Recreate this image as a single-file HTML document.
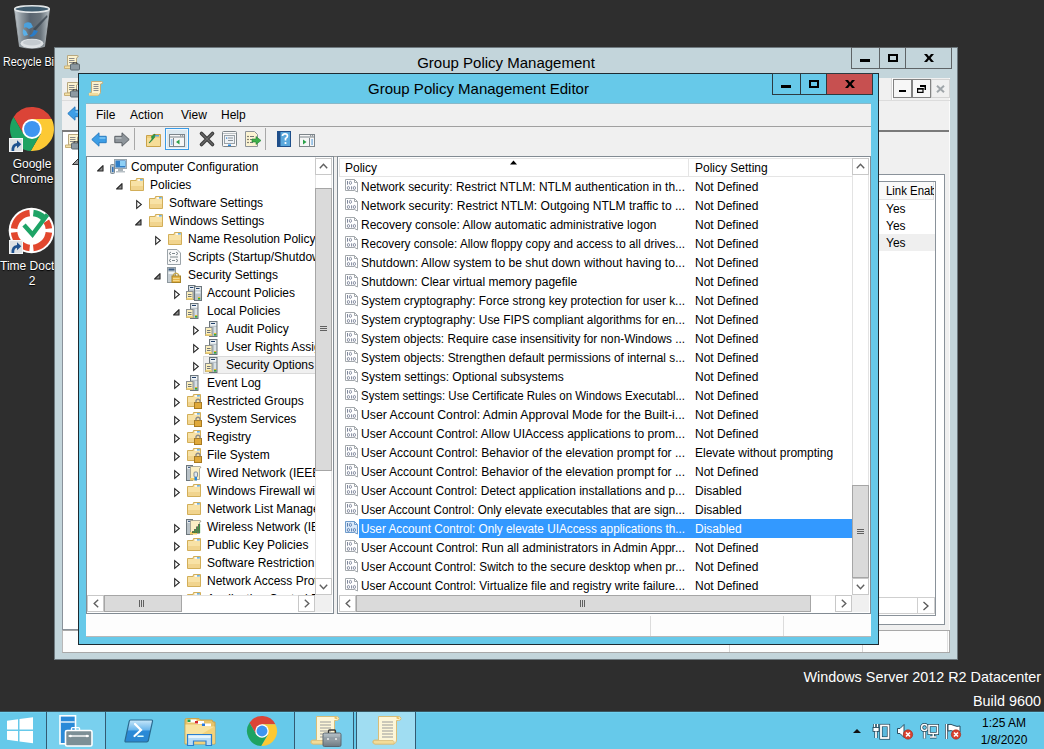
<!DOCTYPE html><html><head><meta charset="utf-8"><style>
*{margin:0;padding:0;box-sizing:border-box}
html,body{width:1044px;height:749px;overflow:hidden;background:#2e2e2e;font-family:"Liberation Sans",sans-serif}
div{position:absolute}
.t{white-space:nowrap}
svg{position:absolute;overflow:visible}
.dt{color:#fff;font-size:12px;line-height:15px;text-shadow:0 1px 1px #000;text-align:center}
</style></head><body>
<svg style="left:14px;top:5px" width="36" height="44" viewBox="0 0 36 44">
<defs><linearGradient id="rb" x1="0" x2="1"><stop offset="0" stop-color="#c4cbd0"/><stop offset="0.2" stop-color="#8e989f"/><stop offset="0.45" stop-color="#5a6570"/><stop offset="0.75" stop-color="#6a747c"/><stop offset="1" stop-color="#b8c0c5"/></linearGradient></defs>
<path d="M0.5 4 L35.5 4 L30.5 41.5 Q18 45 5.5 41.5 Z" fill="url(#rb)" stroke="#a9b1b6" stroke-width="0.8"/>
<path d="M19 24 L33 10 L33.5 12 L21 26 Z" fill="#3c4650" opacity="0.8"/>
<ellipse cx="18" cy="4" rx="17.3" ry="3.2" fill="#405c6e" stroke="#e2e6e8" stroke-width="1.5"/>
<path d="M10 19 Q13 16 17 18 L19 22 L15 24 Q12 21 10 23 Z" fill="#4aa0dc"/>
<path d="M9 24 Q8 28 10 31 L14 30 L12 26 Z" fill="#5ab0e8"/>
<path d="M15 31 Q19 33 22 29 L24 26 L20 25 L18 29 Z" fill="#2a7cc8"/>
<ellipse cx="18" cy="38.5" rx="11.5" ry="4.8" fill="#dde1e4"/><ellipse cx="18" cy="37.5" rx="9" ry="3" fill="#c5cbd0"/>
</svg>
<div class="t" style="left:3px;top:55px;font-size:12px;line-height:15px;color:#fff;text-shadow:0 1px 1px #000;transform:scaleX(0.9);transform-origin:0 0">Recycle Bi</div>
<svg style="left:10px;top:106.69999999999999px" width="44" height="44" viewBox="10 106.69999999999999 44 44"><path d="M32.00 118.80 L51.65 118.80 A22 22 0 0 0 13.60 116.64 L23.43 133.65 Z" fill="#db4437"/><path d="M40.57 133.65 L30.75 150.66 A22 22 0 0 0 51.65 118.80 L32.00 118.80 Z" fill="#fcc934"/><path d="M23.43 133.65 L13.60 116.64 A22 22 0 0 0 30.75 150.66 L40.57 133.65 Z" fill="#1ea362"/><circle cx="32" cy="128.7" r="9.90" fill="#fff"/><circle cx="32" cy="128.7" r="8.03" fill="#3e95f0"/></svg>
<div style="left:9px;top:138px;width:14px;height:14px;background:#dde1e4;border:1px solid #f4f6f7"></div>
<svg style="left:9px;top:138px" width="14" height="14"><path d="M2.5 13 Q2.2 5.5 8 5 V2.2 L12.3 6.3 L8 10.3 V7.8 Q5 8 5.2 13 Z" fill="#1f528f"/></svg>
<div class="t" style="left:0px;top:157px;font-size:12px;line-height:15px;color:#fff;width:64px;text-align:center;text-shadow:0 1px 1px #000">Google</div>
<div class="t" style="left:0px;top:172px;font-size:12px;line-height:15px;color:#fff;width:64px;text-align:center;text-shadow:0 1px 1px #000">Chrome</div>
<svg style="left:8px;top:207px" width="47" height="47" viewBox="0 0 47 47">
<circle cx="23.5" cy="23.5" r="22.8" fill="#fff"/>
<path d="M38.34 14.23 A17.5 17.5 0 0 1 40.90 21.67 M40.90 25.33 A17.5 17.5 0 0 1 25.33 40.90 M21.67 40.90 A17.5 17.5 0 0 1 6.10 25.33 M6.10 21.67 A17.5 17.5 0 0 1 21.67 6.10" fill="none" stroke="#e2472e" stroke-width="6.5"/>
<path d="M25.33 6.10 A17.5 17.5 0 0 1 35.87 11.13" fill="none" stroke="#1ea466" stroke-width="6.5"/>
<path d="M16 18 L24.5 27.5 L39.5 7.5" fill="none" stroke="#1ea466" stroke-width="4.4"/>
</svg>
<div style="left:9px;top:240px;width:14px;height:14px;background:#dde1e4;border:1px solid #f4f6f7"></div>
<svg style="left:9px;top:240px" width="14" height="14"><path d="M2.5 13 Q2.2 5.5 8 5 V2.2 L12.3 6.3 L8 10.3 V7.8 Q5 8 5.2 13 Z" fill="#1f528f"/></svg>
<div class="t" style="left:0px;top:259px;font-size:12px;line-height:15px;color:#fff;text-shadow:0 1px 1px #000">Time Doct</div>
<div class="t" style="left:0px;top:274px;font-size:12px;line-height:15px;color:#fff;width:64px;text-align:center;text-shadow:0 1px 1px #000">2</div>
<div class="t" style="left:700px;top:668px;font-size:14.4px;line-height:18px;color:#fff;width:341px;text-align:right">Windows Server 2012 R2 Datacenter</div>
<div class="t" style="left:700px;top:692px;font-size:14.4px;line-height:18px;color:#fff;width:341px;text-align:right">Build 9600</div>
<div style="left:54px;top:47px;width:904px;height:613px;background:#c3d5db;border:1px solid #6f7a80"></div>
<div class="t" style="left:54px;top:54px;font-size:15px;line-height:18px;color:#000;width:904px;text-align:center">Group Policy Management</div>
<div style="left:851px;top:47px;width:29px;height:22px;border:1px solid #5e6366;background:#c3d5db"></div>
<div style="left:879px;top:47px;width:27px;height:22px;border:1px solid #5e6366;background:#c3d5db"></div>
<div style="left:905px;top:47px;width:47px;height:22px;border:1px solid #5e6366;background:#c3d5db"></div>
<div style="left:860px;top:59px;width:10px;height:3px;background:#000"></div>
<div style="left:888px;top:54px;width:10px;height:8px;border:2px solid #000;border-top-width:2px"></div>
<svg style="left:924px;top:54px" width="10" height="8"><path d="M0 0 H3 L5 2.6 L7 0 H10 L6.6 4 L10 8 H7 L5 5.4 L3 8 H0 L3.4 4 Z" fill="#000"/></svg>
<div style="left:62px;top:78px;width:888px;height:574px;background:#f0f0f0"></div>
<div style="left:949px;top:78px;width:1px;height:574px;background:#fbfbfb"></div>
<div style="left:62px;top:100px;width:888px;height:1px;background:#dcdcdc"></div>
<div style="left:891px;top:78px;width:1px;height:22px;background:#d9d9d9"></div>
<div style="left:892px;top:78px;width:1px;height:22px;background:#fff"></div>
<div style="left:893px;top:79px;width:19px;height:19px;border:1px solid #828282;background:#f7f7f7"></div>
<div style="left:912px;top:79px;width:19px;height:19px;border:1px solid #828282;background:#f7f7f7"></div>
<div style="left:931px;top:79px;width:19px;height:19px;border:1px solid #d4d4d4;background:#f0f0f0"></div>
<div style="left:899px;top:90px;width:7px;height:2px;background:#000"></div>
<svg style="left:917px;top:85px" width="9" height="8"><path d="M3 0 H9 V5 H7.5 V2 H3 Z" fill="#000"/><path d="M0.6 3.6 H6 V7.4 H0.6 Z" fill="#f7f7f7" stroke="#000" stroke-width="1.2"/><path d="M0 3 H6.6 V4.6 H0 Z" fill="#000"/></svg>
<svg style="left:936px;top:85px" width="9" height="8"><path d="M1 0.8 L8 7.2 M8 0.8 L1 7.2" stroke="#a0a6aa" stroke-width="2"/></svg>
<div style="left:62px;top:130px;width:887px;height:2px;background:#7a7a7a"></div>
<div style="left:62px;top:132px;width:30px;height:498px;background:#fff;border-left:1px solid #8a929a;border-bottom:1px solid #8a929a"></div>
<div style="left:870px;top:174px;width:75px;height:451px;background:#fff;border:1px solid #8a929a;border-left:none"></div>
<div style="left:870px;top:181px;width:66px;height:435px;background:#fff;border:1px solid #8a929a;border-left:none"></div>
<div style="left:870px;top:182px;width:64px;height:18px;background:#f9f9f9;border-bottom:1px solid #e3e3e3;border-right:1px solid #e3e3e3"></div>
<div style="left:870px;top:182px;width:64px;height:18px;overflow:hidden"><div class="t" style="left:16px;top:0px;font-size:12px;line-height:19px;color:#000;transform:scaleX(0.95);transform-origin:0 0">Link Enab</div></div>
<div class="t" style="left:886px;top:201px;font-size:12px;line-height:17px;color:#000;">Yes</div>
<div class="t" style="left:886px;top:218px;font-size:12px;line-height:17px;color:#000;">Yes</div>
<div style="left:870px;top:234px;width:65px;height:17px;background:#efefef"></div>
<div class="t" style="left:886px;top:235px;font-size:12px;line-height:17px;color:#000;">Yes</div>
<div style="left:870px;top:597px;width:65px;height:17px;background:#fff;border-top:1px solid #cfcfcf;border-bottom:1px solid #cfcfcf;border-right:1px solid #cfcfcf"></div>
<div style="left:917px;top:597px;width:1px;height:17px;background:#cfcfcf"></div>
<svg style="left:922px;top:601px" width="8" height="10"><path d="M1.5 1 L6 5 L1.5 9" fill="none" stroke="#555" stroke-width="1.3"/></svg>
<div style="left:62px;top:630px;width:888px;height:23px;background:#fdfdfd;border:1px solid #a8a8a8;border-left:1px solid #b8b8b8"></div>
<div style="left:947px;top:631px;width:1px;height:21px;background:#e0e0e0"></div>
<div style="left:729px;top:645px;width:1px;height:7px;background:#d6d6d6"></div>
<div style="left:862px;top:645px;width:1px;height:7px;background:#d6d6d6"></div>
<svg style="left:64px;top:82px" width="16" height="15" viewBox="0 0 16 15"><path d="M3.5 0.5 H13 Q15 0.5 14 2 L12.5 3 V11 H3.5 Z" fill="#fbf2cf" stroke="#b8a880"/><path d="M5 3.5 H10.5 M5 5.5 H10.5 M5 7.5 H10.5" stroke="#8a8a8a"/><path d="M0.5 11 H9 V13.5 H0.5 Z" fill="#f4e2a8" stroke="#c8b078"/><rect x="6.5" y="9" width="9" height="6" rx="1" fill="#8e9aa2" stroke="#5e6a72"/><path d="M9 9 V7.8 H13 V9" fill="none" stroke="#3a3a3a"/></svg>
<svg style="left:67px;top:106px" width="16" height="15" viewBox="0 0 16 15"><path d="M0.8 7.5 L8 0.8 V4.3 H15.2 V10.7 H8 V14.2 Z" fill="#3d9ee6" stroke="#2a7cc0" stroke-width="1" stroke-linejoin="round"/><path d="M8.5 5 H14.5 V7 H8.5 Z" fill="#7cc4f4" opacity="0.8"/></svg>
<svg style="left:65px;top:134px" width="16" height="15" viewBox="0 0 16 15"><path d="M3.5 0.5 H13 Q15 0.5 14 2 L12.5 3 V11 H3.5 Z" fill="#fbf2cf" stroke="#b8a880"/><path d="M5 3.5 H10.5 M5 5.5 H10.5 M5 7.5 H10.5" stroke="#8a8a8a"/><path d="M0.5 11 H9 V13.5 H0.5 Z" fill="#f4e2a8" stroke="#c8b078"/><rect x="6.5" y="9" width="9" height="6" rx="1" fill="#8e9aa2" stroke="#5e6a72"/><path d="M9 9 V7.8 H13 V9" fill="none" stroke="#3a3a3a"/></svg>
<svg style="left:72px;top:158px" width="7" height="7" viewBox="0 0 7 7"><path d="M6.5 0.5 V6.5 H0.5 Z" fill="#999" stroke="#333" stroke-width="1"/></svg>
<svg style="left:64px;top:55px" width="16" height="15" viewBox="0 0 16 15"><path d="M3.5 0.5 H13 Q15 0.5 14 2 L12.5 3 V11 H3.5 Z" fill="#fbf2cf" stroke="#b8a880"/><path d="M5 3.5 H10.5 M5 5.5 H10.5 M5 7.5 H10.5" stroke="#8a8a8a"/><path d="M0.5 11 H9 V13.5 H0.5 Z" fill="#f4e2a8" stroke="#c8b078"/><rect x="6.5" y="9" width="9" height="6" rx="1" fill="#8e9aa2" stroke="#5e6a72"/><path d="M9 9 V7.8 H13 V9" fill="none" stroke="#3a3a3a"/></svg>
<div style="left:78px;top:73px;width:801px;height:572px;background:#67c9e9;border:1px solid #1e2a30"></div>
<div class="t" style="left:78px;top:80px;font-size:15px;line-height:18px;color:#000;width:801px;text-align:center">Group Policy Management Editor</div>
<div style="left:772px;top:73px;width:29px;height:22px;border:1px solid #2c3a40;background:#67c9e9"></div>
<div style="left:800px;top:73px;width:27px;height:22px;border:1px solid #2c3a40;background:#67c9e9"></div>
<div style="left:826px;top:73px;width:47px;height:22px;border:1px solid #2c3a40;background:#c75050"></div>
<div style="left:781px;top:85px;width:10px;height:3px;background:#000"></div>
<div style="left:809px;top:80px;width:10px;height:8px;border:2px solid #000"></div>
<svg style="left:845px;top:80px" width="10" height="8"><path d="M0 0 H3 L5 2.6 L7 0 H10 L6.6 4 L10 8 H7 L5 5.4 L3 8 H0 L3.4 4 Z" fill="#000"/></svg>
<div style="left:86px;top:103px;width:785px;height:534px;background:#f0f0f0;border-top:1px solid #8ab8c8"></div>
<div class="t" style="left:96px;top:108px;font-size:12px;line-height:15px;color:#000;">File</div>
<div class="t" style="left:130px;top:108px;font-size:12px;line-height:15px;color:#000;">Action</div>
<div class="t" style="left:181px;top:108px;font-size:12px;line-height:15px;color:#000;">View</div>
<div class="t" style="left:221px;top:108px;font-size:12px;line-height:15px;color:#000;">Help</div>
<div style="left:86px;top:126px;width:785px;height:1px;background:#a0a0a0"></div>
<div style="left:86px;top:156px;width:785px;height:1px;background:#a0a0a0"></div>
<div style="left:86px;top:156px;width:248px;height:458px;background:#fff;border:1px solid #828b93"></div>
<div style="left:337px;top:156px;width:534px;height:458px;background:#fff;border:1px solid #828b93"></div>
<div style="left:86px;top:614px;width:785px;height:23px;background:#fdfdfd;border-bottom:1px solid #b8b8b8"></div>
<div style="left:650px;top:616px;width:1px;height:20px;background:#dcdcdc"></div>
<div style="left:783px;top:616px;width:1px;height:20px;background:#dcdcdc"></div>
<div style="left:87px;top:157px;width:228px;height:438px;overflow:hidden;background:#fff">
<svg style="left:10px;top:8px" width="7" height="7"><path d="M6 0.6 V6 H0.6 Z" fill="#8c8c8c" stroke="#262626" stroke-width="1.1" stroke-linejoin="round"/></svg>
<svg style="left:23px;top:2px" width="17" height="15" viewBox="0 0 17 15">
<rect x="4.5" y="0.5" width="12" height="9" fill="#c9d3da" stroke="#9aa6ae"/><rect x="5.5" y="1.5" width="10" height="7" fill="#2f7fc8"/><rect x="10" y="2" width="5" height="5" fill="#8ed0f5"/>
<rect x="8" y="10" width="5" height="2" fill="#a8b2b8"/><rect x="6" y="12" width="9" height="1.5" fill="#b8c0c5"/>
<rect x="0.5" y="5.5" width="4" height="9" rx="1" fill="#b8c4cc" stroke="#7a8a94"/><rect x="2" y="8" width="1.5" height="5" fill="#2d6fb8"/></svg>
<div class="t" style="left:44px;top:1px;font-size:12px;line-height:18px;color:#000;">Computer Configuration</div>
<svg style="left:29px;top:26px" width="7" height="7"><path d="M6 0.6 V6 H0.6 Z" fill="#8c8c8c" stroke="#262626" stroke-width="1.1" stroke-linejoin="round"/></svg>
<svg style="left:42px;top:20px" width="16" height="16" viewBox="0 0 16 16"><path d="M1.5 3.5 H7 L7.5 1.5 H14.5 V13.5 H1.5 Z" fill="#f3d68f" stroke="#d2ae58" stroke-width="1"/><rect x="8.5" y="2.2" width="5.3" height="1.6" fill="#fff"/><rect x="11" y="2.2" width="2.8" height="1.3" fill="#4aa2e0"/><path d="M2 4 H14 V13 H2 Z" fill="#f8e2a6"/><path d="M2 9 H14 V13 H2 Z" fill="#f1d48e"/></svg>
<div class="t" style="left:63px;top:19px;font-size:12px;line-height:18px;color:#000;">Policies</div>
<svg style="left:49px;top:43px" width="7" height="10"><path d="M0.7 0.7 L5.3 4.5 L0.7 8.3 Z" fill="#fff" stroke="#262626" stroke-width="1.1"/></svg>
<svg style="left:61px;top:38px" width="16" height="16" viewBox="0 0 16 16"><path d="M1.5 3.5 H7 L7.5 1.5 H14.5 V13.5 H1.5 Z" fill="#f3d68f" stroke="#d2ae58" stroke-width="1"/><rect x="8.5" y="2.2" width="5.3" height="1.6" fill="#fff"/><rect x="11" y="2.2" width="2.8" height="1.3" fill="#4aa2e0"/><path d="M2 4 H14 V13 H2 Z" fill="#f8e2a6"/><path d="M2 9 H14 V13 H2 Z" fill="#f1d48e"/></svg>
<div class="t" style="left:82px;top:37px;font-size:12px;line-height:18px;color:#000;">Software Settings</div>
<svg style="left:48px;top:62px" width="7" height="7"><path d="M6 0.6 V6 H0.6 Z" fill="#8c8c8c" stroke="#262626" stroke-width="1.1" stroke-linejoin="round"/></svg>
<svg style="left:61px;top:56px" width="16" height="16" viewBox="0 0 16 16"><path d="M1.5 3.5 H7 L7.5 1.5 H14.5 V13.5 H1.5 Z" fill="#f3d68f" stroke="#d2ae58" stroke-width="1"/><rect x="8.5" y="2.2" width="5.3" height="1.6" fill="#fff"/><rect x="11" y="2.2" width="2.8" height="1.3" fill="#4aa2e0"/><path d="M2 4 H14 V13 H2 Z" fill="#f8e2a6"/><path d="M2 9 H14 V13 H2 Z" fill="#f1d48e"/></svg>
<div class="t" style="left:82px;top:55px;font-size:12px;line-height:18px;color:#000;">Windows Settings</div>
<svg style="left:68px;top:79px" width="7" height="10"><path d="M0.7 0.7 L5.3 4.5 L0.7 8.3 Z" fill="#fff" stroke="#262626" stroke-width="1.1"/></svg>
<svg style="left:80px;top:74px" width="16" height="16" viewBox="0 0 16 16"><path d="M1.5 3.5 H7 L7.5 1.5 H14.5 V13.5 H1.5 Z" fill="#f3d68f" stroke="#d2ae58" stroke-width="1"/><rect x="8.5" y="2.2" width="5.3" height="1.6" fill="#fff"/><rect x="11" y="2.2" width="2.8" height="1.3" fill="#4aa2e0"/><path d="M2 4 H14 V13 H2 Z" fill="#f8e2a6"/><path d="M2 9 H14 V13 H2 Z" fill="#f1d48e"/></svg>
<div class="t" style="left:101px;top:73px;font-size:12px;line-height:18px;color:#000;">Name Resolution Policy</div>
<svg style="left:80px;top:92px" width="14" height="16" viewBox="0 0 14 16">
<path d="M0.5 0.5 H10 L13.5 4 V15.5 H0.5 Z" fill="#f8f8f8" stroke="#9ba3a8"/>
<path d="M4 3 L2 4.5 L4 6 M9 3 L11 4.5 L9 6 M5 4.5 H8 M3 8 H11 M4 10 L2 11.5 L4 13 M9 10 L11 11.5 L9 13 M5 11.5 H8" fill="none" stroke="#6f7a80" stroke-width="0.9"/></svg>
<div class="t" style="left:101px;top:91px;font-size:12px;line-height:18px;color:#000;">Scripts (Startup/Shutdown)</div>
<svg style="left:67px;top:116px" width="7" height="7"><path d="M6 0.6 V6 H0.6 Z" fill="#8c8c8c" stroke="#262626" stroke-width="1.1" stroke-linejoin="round"/></svg>
<svg style="left:80px;top:110px" width="14" height="16" viewBox="0 0 14 16">
<rect x="0.5" y="0.5" width="8" height="15" fill="#c6ced3" stroke="#8e989e"/><rect x="1.5" y="1.5" width="6" height="2" fill="#3a5a80"/><rect x="1.5" y="5" width="6" height="2" fill="#eef2f4"/>
<path d="M6.5 9 V7.5 Q9 5 11.5 7.5 V9" fill="none" stroke="#c8a850" stroke-width="1.4"/><rect x="5" y="9" width="8.5" height="6.5" fill="#e4b449" stroke="#a88428"/><path d="M6 11.5 H12.5 M6 13.5 H12.5" stroke="#f6d98a"/></svg>
<div class="t" style="left:101px;top:109px;font-size:12px;line-height:18px;color:#000;">Security Settings</div>
<svg style="left:87px;top:133px" width="7" height="10"><path d="M0.7 0.7 L5.3 4.5 L0.7 8.3 Z" fill="#fff" stroke="#262626" stroke-width="1.1"/></svg>
<svg style="left:99px;top:128px" width="16" height="16" viewBox="0 0 16 16">
<rect x="2.5" y="0.5" width="6.5" height="14" fill="#b9c2c8" stroke="#6c767c"/><rect x="3.3" y="1.3" width="4.9" height="3" fill="#f2f6f8"/><rect x="4" y="2" width="3.4" height="1" fill="#1f3f6a"/>
<rect x="8.5" y="1.5" width="7" height="14" fill="#b9c2c8" stroke="#6c767c"/><rect x="9.3" y="2.3" width="5.4" height="3" fill="#f2f6f8"/><rect x="10" y="3" width="3.6" height="1" fill="#1f3f6a"/><rect x="9.5" y="6.5" width="5" height="2" fill="#e8eef2"/>
<rect x="12" y="12" width="2.2" height="1" fill="#e8b830"/><rect x="12" y="13" width="2.2" height="1.6" fill="#30a840"/>
<rect x="0.5" y="6.5" width="6.5" height="8" fill="#fbefbd" stroke="#8c9090"/><path d="M2 9.5 H5.5 M2 11.5 H5.5" stroke="#70767c"/><rect x="0.3" y="13.2" width="6.9" height="1.6" fill="#efcd6a"/></svg>
<div class="t" style="left:120px;top:127px;font-size:12px;line-height:18px;color:#000;">Account Policies</div>
<svg style="left:86px;top:152px" width="7" height="7"><path d="M6 0.6 V6 H0.6 Z" fill="#8c8c8c" stroke="#262626" stroke-width="1.1" stroke-linejoin="round"/></svg>
<svg style="left:99px;top:146px" width="13" height="16" viewBox="0 0 13 16">
<rect x="4.5" y="0.5" width="7.5" height="15" fill="#b9c2c8" stroke="#6c767c"/><rect x="5.3" y="1.3" width="5.9" height="3.4" fill="#f2f6f8"/><rect x="6" y="2" width="4" height="1" fill="#1f3f6a"/><rect x="9" y="6" width="2.2" height="6" fill="#d8e0e4"/>
<rect x="9" y="12" width="2.2" height="1" fill="#e8b830"/><rect x="9" y="13" width="2.2" height="1.6" fill="#30a840"/>
<rect x="0.5" y="6.5" width="6.5" height="8" fill="#fbefbd" stroke="#8c9090"/><path d="M2 9.5 H5.5 M2 11.5 H5.5" stroke="#70767c"/><rect x="0.3" y="13.2" width="6.9" height="1.6" fill="#efcd6a"/></svg>
<div class="t" style="left:120px;top:145px;font-size:12px;line-height:18px;color:#000;">Local Policies</div>
<svg style="left:106px;top:169px" width="7" height="10"><path d="M0.7 0.7 L5.3 4.5 L0.7 8.3 Z" fill="#fff" stroke="#262626" stroke-width="1.1"/></svg>
<svg style="left:118px;top:164px" width="13" height="16" viewBox="0 0 13 16">
<rect x="4.5" y="0.5" width="7.5" height="15" fill="#b9c2c8" stroke="#6c767c"/><rect x="5.3" y="1.3" width="5.9" height="3.4" fill="#f2f6f8"/><rect x="6" y="2" width="4" height="1" fill="#1f3f6a"/><rect x="9" y="6" width="2.2" height="6" fill="#d8e0e4"/>
<rect x="9" y="12" width="2.2" height="1" fill="#e8b830"/><rect x="9" y="13" width="2.2" height="1.6" fill="#30a840"/>
<rect x="0.5" y="6.5" width="6.5" height="8" fill="#fbefbd" stroke="#8c9090"/><path d="M2 9.5 H5.5 M2 11.5 H5.5" stroke="#70767c"/><rect x="0.3" y="13.2" width="6.9" height="1.6" fill="#efcd6a"/></svg>
<div class="t" style="left:139px;top:163px;font-size:12px;line-height:18px;color:#000;">Audit Policy</div>
<svg style="left:106px;top:187px" width="7" height="10"><path d="M0.7 0.7 L5.3 4.5 L0.7 8.3 Z" fill="#fff" stroke="#262626" stroke-width="1.1"/></svg>
<svg style="left:118px;top:182px" width="13" height="16" viewBox="0 0 13 16">
<rect x="4.5" y="0.5" width="7.5" height="15" fill="#b9c2c8" stroke="#6c767c"/><rect x="5.3" y="1.3" width="5.9" height="3.4" fill="#f2f6f8"/><rect x="6" y="2" width="4" height="1" fill="#1f3f6a"/><rect x="9" y="6" width="2.2" height="6" fill="#d8e0e4"/>
<rect x="9" y="12" width="2.2" height="1" fill="#e8b830"/><rect x="9" y="13" width="2.2" height="1.6" fill="#30a840"/>
<rect x="0.5" y="6.5" width="6.5" height="8" fill="#fbefbd" stroke="#8c9090"/><path d="M2 9.5 H5.5 M2 11.5 H5.5" stroke="#70767c"/><rect x="0.3" y="13.2" width="6.9" height="1.6" fill="#efcd6a"/></svg>
<div class="t" style="left:139px;top:181px;font-size:12px;line-height:18px;color:#000;">User Rights Assignment</div>
<div style="left:116px;top:199px;width:140px;height:18px;background:#f0f0f0;border:1px solid #dadada"></div>
<svg style="left:106px;top:205px" width="7" height="10"><path d="M0.7 0.7 L5.3 4.5 L0.7 8.3 Z" fill="#fff" stroke="#262626" stroke-width="1.1"/></svg>
<svg style="left:118px;top:200px" width="13" height="16" viewBox="0 0 13 16">
<rect x="4.5" y="0.5" width="7.5" height="15" fill="#b9c2c8" stroke="#6c767c"/><rect x="5.3" y="1.3" width="5.9" height="3.4" fill="#f2f6f8"/><rect x="6" y="2" width="4" height="1" fill="#1f3f6a"/><rect x="9" y="6" width="2.2" height="6" fill="#d8e0e4"/>
<rect x="9" y="12" width="2.2" height="1" fill="#e8b830"/><rect x="9" y="13" width="2.2" height="1.6" fill="#30a840"/>
<rect x="0.5" y="6.5" width="6.5" height="8" fill="#fbefbd" stroke="#8c9090"/><path d="M2 9.5 H5.5 M2 11.5 H5.5" stroke="#70767c"/><rect x="0.3" y="13.2" width="6.9" height="1.6" fill="#efcd6a"/></svg>
<div class="t" style="left:139px;top:199px;font-size:12px;line-height:18px;color:#000;">Security Options</div>
<svg style="left:87px;top:223px" width="7" height="10"><path d="M0.7 0.7 L5.3 4.5 L0.7 8.3 Z" fill="#fff" stroke="#262626" stroke-width="1.1"/></svg>
<svg style="left:99px;top:218px" width="13" height="16" viewBox="0 0 13 16">
<rect x="4.5" y="0.5" width="7.5" height="15" fill="#b9c2c8" stroke="#6c767c"/><rect x="5.3" y="1.3" width="5.9" height="3.4" fill="#f2f6f8"/><rect x="6" y="2" width="4" height="1" fill="#1f3f6a"/><rect x="9" y="6" width="2.2" height="6" fill="#d8e0e4"/>
<rect x="9" y="12" width="2.2" height="1" fill="#e8b830"/><rect x="9" y="13" width="2.2" height="1.6" fill="#30a840"/>
<rect x="0.5" y="6.5" width="6.5" height="8" fill="#fbefbd" stroke="#8c9090"/><path d="M2 9.5 H5.5 M2 11.5 H5.5" stroke="#70767c"/><rect x="0.3" y="13.2" width="6.9" height="1.6" fill="#efcd6a"/></svg>
<div class="t" style="left:120px;top:217px;font-size:12px;line-height:18px;color:#000;">Event Log</div>
<svg style="left:87px;top:241px" width="7" height="10"><path d="M0.7 0.7 L5.3 4.5 L0.7 8.3 Z" fill="#fff" stroke="#262626" stroke-width="1.1"/></svg>
<svg style="left:99px;top:236px" width="16" height="16" viewBox="0 0 16 16"><path d="M1.5 3.5 H7 L7.5 1.5 H14.5 V13.5 H1.5 Z" fill="#f3d68f" stroke="#d2ae58" stroke-width="1"/><rect x="8.5" y="2.2" width="5.3" height="1.6" fill="#fff"/><rect x="11" y="2.2" width="2.8" height="1.3" fill="#4aa2e0"/><path d="M2 4 H14 V13 H2 Z" fill="#f8e2a6"/><path d="M2 9 H14 V13 H2 Z" fill="#f1d48e"/><rect x="8.5" y="9.5" width="7" height="6" fill="#e0a93a" stroke="#a87a20" stroke-width="1"/><path d="M10 9.5 V7.5 Q12 5 14 7.5 V9.5" fill="none" stroke="#8a8a8a" stroke-width="1.3"/></svg>
<div class="t" style="left:120px;top:235px;font-size:12px;line-height:18px;color:#000;">Restricted Groups</div>
<svg style="left:87px;top:259px" width="7" height="10"><path d="M0.7 0.7 L5.3 4.5 L0.7 8.3 Z" fill="#fff" stroke="#262626" stroke-width="1.1"/></svg>
<svg style="left:99px;top:254px" width="16" height="16" viewBox="0 0 16 16"><path d="M1.5 3.5 H7 L7.5 1.5 H14.5 V13.5 H1.5 Z" fill="#f3d68f" stroke="#d2ae58" stroke-width="1"/><rect x="8.5" y="2.2" width="5.3" height="1.6" fill="#fff"/><rect x="11" y="2.2" width="2.8" height="1.3" fill="#4aa2e0"/><path d="M2 4 H14 V13 H2 Z" fill="#f8e2a6"/><path d="M2 9 H14 V13 H2 Z" fill="#f1d48e"/><rect x="8.5" y="9.5" width="7" height="6" fill="#e0a93a" stroke="#a87a20" stroke-width="1"/><path d="M10 9.5 V7.5 Q12 5 14 7.5 V9.5" fill="none" stroke="#8a8a8a" stroke-width="1.3"/></svg>
<div class="t" style="left:120px;top:253px;font-size:12px;line-height:18px;color:#000;">System Services</div>
<svg style="left:87px;top:277px" width="7" height="10"><path d="M0.7 0.7 L5.3 4.5 L0.7 8.3 Z" fill="#fff" stroke="#262626" stroke-width="1.1"/></svg>
<svg style="left:99px;top:272px" width="16" height="16" viewBox="0 0 16 16"><path d="M1.5 3.5 H7 L7.5 1.5 H14.5 V13.5 H1.5 Z" fill="#f3d68f" stroke="#d2ae58" stroke-width="1"/><rect x="8.5" y="2.2" width="5.3" height="1.6" fill="#fff"/><rect x="11" y="2.2" width="2.8" height="1.3" fill="#4aa2e0"/><path d="M2 4 H14 V13 H2 Z" fill="#f8e2a6"/><path d="M2 9 H14 V13 H2 Z" fill="#f1d48e"/><rect x="8.5" y="9.5" width="7" height="6" fill="#e0a93a" stroke="#a87a20" stroke-width="1"/><path d="M10 9.5 V7.5 Q12 5 14 7.5 V9.5" fill="none" stroke="#8a8a8a" stroke-width="1.3"/></svg>
<div class="t" style="left:120px;top:271px;font-size:12px;line-height:18px;color:#000;">Registry</div>
<svg style="left:87px;top:295px" width="7" height="10"><path d="M0.7 0.7 L5.3 4.5 L0.7 8.3 Z" fill="#fff" stroke="#262626" stroke-width="1.1"/></svg>
<svg style="left:99px;top:290px" width="16" height="16" viewBox="0 0 16 16"><path d="M1.5 3.5 H7 L7.5 1.5 H14.5 V13.5 H1.5 Z" fill="#f3d68f" stroke="#d2ae58" stroke-width="1"/><rect x="8.5" y="2.2" width="5.3" height="1.6" fill="#fff"/><rect x="11" y="2.2" width="2.8" height="1.3" fill="#4aa2e0"/><path d="M2 4 H14 V13 H2 Z" fill="#f8e2a6"/><path d="M2 9 H14 V13 H2 Z" fill="#f1d48e"/><rect x="8.5" y="9.5" width="7" height="6" fill="#e0a93a" stroke="#a87a20" stroke-width="1"/><path d="M10 9.5 V7.5 Q12 5 14 7.5 V9.5" fill="none" stroke="#8a8a8a" stroke-width="1.3"/></svg>
<div class="t" style="left:120px;top:289px;font-size:12px;line-height:18px;color:#000;">File System</div>
<svg style="left:87px;top:313px" width="7" height="10"><path d="M0.7 0.7 L5.3 4.5 L0.7 8.3 Z" fill="#fff" stroke="#262626" stroke-width="1.1"/></svg>
<svg style="left:99px;top:308px" width="16" height="16" viewBox="0 0 16 16">
<rect x="0.5" y="0.5" width="6" height="15" fill="#b9c2c8" stroke="#6c767c"/><rect x="1.3" y="1.3" width="4.4" height="2.5" fill="#f2f6f8"/><rect x="2" y="1.8" width="3" height="1" fill="#1f3f6a"/>
<path d="M4.5 1.5 H14 Q15.5 1.8 14.5 3 L13.5 3.5 V14.5 H4.5 Z" fill="#fbefc4" stroke="#9a9a8a" stroke-width="0.8"/><rect x="4" y="13" width="7" height="2.5" fill="#efcd6a"/>
<rect x="8" y="7" width="3.5" height="5" rx="1" fill="#dfe8ee" stroke="#6a7a88" stroke-width="0.8"/><rect x="8.5" y="12" width="2.5" height="3.5" fill="#2a86d8"/></svg>
<div class="t" style="left:120px;top:307px;font-size:12px;line-height:18px;color:#000;">Wired Network (IEEE 802.3) Policies</div>
<svg style="left:87px;top:331px" width="7" height="10"><path d="M0.7 0.7 L5.3 4.5 L0.7 8.3 Z" fill="#fff" stroke="#262626" stroke-width="1.1"/></svg>
<svg style="left:99px;top:326px" width="16" height="16" viewBox="0 0 16 16"><path d="M1.5 3.5 H7 L7.5 1.5 H14.5 V13.5 H1.5 Z" fill="#f3d68f" stroke="#d2ae58" stroke-width="1"/><rect x="8.5" y="2.2" width="5.3" height="1.6" fill="#fff"/><rect x="11" y="2.2" width="2.8" height="1.3" fill="#4aa2e0"/><path d="M2 4 H14 V13 H2 Z" fill="#f8e2a6"/><path d="M2 9 H14 V13 H2 Z" fill="#f1d48e"/></svg>
<div class="t" style="left:120px;top:325px;font-size:12px;line-height:18px;color:#000;">Windows Firewall with Advanced Security</div>
<svg style="left:99px;top:344px" width="16" height="16" viewBox="0 0 16 16"><path d="M1.5 3.5 H7 L7.5 1.5 H14.5 V13.5 H1.5 Z" fill="#f3d68f" stroke="#d2ae58" stroke-width="1"/><rect x="8.5" y="2.2" width="5.3" height="1.6" fill="#fff"/><rect x="11" y="2.2" width="2.8" height="1.3" fill="#4aa2e0"/><path d="M2 4 H14 V13 H2 Z" fill="#f8e2a6"/><path d="M2 9 H14 V13 H2 Z" fill="#f1d48e"/></svg>
<div class="t" style="left:120px;top:343px;font-size:12px;line-height:18px;color:#000;">Network List Manager Policies</div>
<svg style="left:87px;top:367px" width="7" height="10"><path d="M0.7 0.7 L5.3 4.5 L0.7 8.3 Z" fill="#fff" stroke="#262626" stroke-width="1.1"/></svg>
<svg style="left:99px;top:362px" width="16" height="16" viewBox="0 0 16 16">
<rect x="0.5" y="0.5" width="6" height="15" fill="#b9c2c8" stroke="#6c767c"/><rect x="1.3" y="1.3" width="4.4" height="2.5" fill="#f2f6f8"/><rect x="2" y="1.8" width="3" height="1" fill="#1f3f6a"/>
<path d="M4.5 1.5 H14 Q15.5 1.8 14.5 3 L13.5 3.5 V14.5 H4.5 Z" fill="#fbefc4" stroke="#9a9a8a" stroke-width="0.8"/><rect x="4" y="13" width="7" height="2.5" fill="#efcd6a"/>
<path d="M7 14 V12 M9 14 V10 M11 14 V7.5 M13 14 V5" stroke="#1f1f1f" stroke-width="1.3"/><path d="M7.7 14 V12 M9.7 14 V10 M11.7 14 V7.5 M13.7 14 V5" stroke="#30b040" stroke-width="0.8"/></svg>
<div class="t" style="left:120px;top:361px;font-size:12px;line-height:18px;color:#000;">Wireless Network (IEEE 802.11) Policies</div>
<svg style="left:87px;top:385px" width="7" height="10"><path d="M0.7 0.7 L5.3 4.5 L0.7 8.3 Z" fill="#fff" stroke="#262626" stroke-width="1.1"/></svg>
<svg style="left:99px;top:380px" width="16" height="16" viewBox="0 0 16 16"><path d="M1.5 3.5 H7 L7.5 1.5 H14.5 V13.5 H1.5 Z" fill="#f3d68f" stroke="#d2ae58" stroke-width="1"/><rect x="8.5" y="2.2" width="5.3" height="1.6" fill="#fff"/><rect x="11" y="2.2" width="2.8" height="1.3" fill="#4aa2e0"/><path d="M2 4 H14 V13 H2 Z" fill="#f8e2a6"/><path d="M2 9 H14 V13 H2 Z" fill="#f1d48e"/></svg>
<div class="t" style="left:120px;top:379px;font-size:12px;line-height:18px;color:#000;">Public Key Policies</div>
<svg style="left:87px;top:403px" width="7" height="10"><path d="M0.7 0.7 L5.3 4.5 L0.7 8.3 Z" fill="#fff" stroke="#262626" stroke-width="1.1"/></svg>
<svg style="left:99px;top:398px" width="16" height="16" viewBox="0 0 16 16"><path d="M1.5 3.5 H7 L7.5 1.5 H14.5 V13.5 H1.5 Z" fill="#f3d68f" stroke="#d2ae58" stroke-width="1"/><rect x="8.5" y="2.2" width="5.3" height="1.6" fill="#fff"/><rect x="11" y="2.2" width="2.8" height="1.3" fill="#4aa2e0"/><path d="M2 4 H14 V13 H2 Z" fill="#f8e2a6"/><path d="M2 9 H14 V13 H2 Z" fill="#f1d48e"/></svg>
<div class="t" style="left:120px;top:397px;font-size:12px;line-height:18px;color:#000;">Software Restriction Policies</div>
<svg style="left:87px;top:421px" width="7" height="10"><path d="M0.7 0.7 L5.3 4.5 L0.7 8.3 Z" fill="#fff" stroke="#262626" stroke-width="1.1"/></svg>
<svg style="left:99px;top:416px" width="16" height="16" viewBox="0 0 16 16"><path d="M1.5 3.5 H7 L7.5 1.5 H14.5 V13.5 H1.5 Z" fill="#f3d68f" stroke="#d2ae58" stroke-width="1"/><rect x="8.5" y="2.2" width="5.3" height="1.6" fill="#fff"/><rect x="11" y="2.2" width="2.8" height="1.3" fill="#4aa2e0"/><path d="M2 4 H14 V13 H2 Z" fill="#f8e2a6"/><path d="M2 9 H14 V13 H2 Z" fill="#f1d48e"/></svg>
<div class="t" style="left:120px;top:415px;font-size:12px;line-height:18px;color:#000;">Network Access Protection</div>
<svg style="left:87px;top:439px" width="7" height="10"><path d="M0.7 0.7 L5.3 4.5 L0.7 8.3 Z" fill="#fff" stroke="#262626" stroke-width="1.1"/></svg>
<svg style="left:99px;top:434px" width="16" height="16" viewBox="0 0 16 16"><path d="M1.5 3.5 H7 L7.5 1.5 H14.5 V13.5 H1.5 Z" fill="#f3d68f" stroke="#d2ae58" stroke-width="1"/><rect x="8.5" y="2.2" width="5.3" height="1.6" fill="#fff"/><rect x="11" y="2.2" width="2.8" height="1.3" fill="#4aa2e0"/><path d="M2 4 H14 V13 H2 Z" fill="#f8e2a6"/><path d="M2 9 H14 V13 H2 Z" fill="#f1d48e"/></svg>
<div class="t" style="left:120px;top:433px;font-size:12px;line-height:18px;color:#000;">Application Control Policies</div>
</div>
<div style="left:315px;top:157px;width:17px;height:438px;background:#fff;border-left:1px solid #e3e3e3;border-right:1px solid #e3e3e3"></div>
<div style="left:315px;top:158px;width:17px;height:17px;background:#fff;border:1px solid #c8c8c8"></div>
<svg style="left:319px;top:163px" width="9" height="6"><path d="M0.8 5.2 L4.5 1.2 L8.2 5.2" fill="none" stroke="#606060" stroke-width="1.4"/></svg>
<div style="left:315px;top:188px;width:17px;height:283px;background:#dadada;border:1px solid #a6a6a6"></div>
<div style="left:320px;top:326px;width:7px;height:1px;background:#606060;box-shadow:0 2px 0 #606060,0 4px 0 #606060"></div>
<div style="left:315px;top:578px;width:17px;height:17px;background:#fff;border:1px solid #c8c8c8"></div>
<svg style="left:319px;top:584px" width="9" height="6"><path d="M0.8 0.8 L4.5 4.8 L8.2 0.8" fill="none" stroke="#606060" stroke-width="1.4"/></svg>
<div style="left:87px;top:595px;width:228px;height:17px;background:#fff;border-top:1px solid #e3e3e3"></div>
<div style="left:87px;top:595px;width:17px;height:17px;background:#fff;border:1px solid #c8c8c8"></div>
<svg style="left:93px;top:599px" width="6" height="9"><path d="M5.2 0.8 L1.2 4.5 L5.2 8.2" fill="none" stroke="#606060" stroke-width="1.4"/></svg>
<div style="left:104px;top:595px;width:78px;height:17px;background:#dadada;border:1px solid #a6a6a6"></div>
<div style="left:139px;top:600px;width:1px;height:7px;background:#606060;box-shadow:2px 0 0 #606060,4px 0 0 #606060"></div>
<div style="left:298px;top:595px;width:17px;height:17px;background:#fff;border:1px solid #c8c8c8"></div>
<svg style="left:304px;top:599px" width="6" height="9"><path d="M0.8 0.8 L4.8 4.5 L0.8 8.2" fill="none" stroke="#606060" stroke-width="1.4"/></svg>
<div style="left:315px;top:595px;width:17px;height:17px;background:#f0f0f0"></div>
<div style="left:339px;top:158px;width:513px;height:19px;background:#fff;border:1px solid #e5e5e5;border-right:none"></div>
<div style="left:688px;top:159px;width:1px;height:17px;background:#e5e5e5"></div>
<div class="t" style="left:345px;top:159px;font-size:12px;line-height:19px;color:#000;">Policy</div>
<div class="t" style="left:695px;top:159px;font-size:12px;line-height:19px;color:#000;">Policy Setting</div>
<svg style="left:510px;top:160px" width="7" height="5"><path d="M0 4.5 L3.5 0.5 L7 4.5 Z" fill="#000"/></svg>
<svg style="left:345px;top:179px" width="14" height="15" viewBox="0 0 14 15">
<path d="M0.5 0.5 H9.5 L12.5 3.5 V13 L9.5 11.5 H0.5 Z" fill="#fff" stroke="#a3a8ac"/><path d="M9.5 0.5 V3.5 H12.5" fill="none" stroke="#a3a8ac"/>
<path d="M2.5 2 V5.7 M6.6 7.3 V10.6" stroke="#7f879c" stroke-width="1"/><ellipse cx="5.4" cy="3.85" rx="1.1" ry="1.55" fill="none" stroke="#7f879c" stroke-width="0.9"/><ellipse cx="3.4" cy="8.95" rx="1.1" ry="1.55" fill="none" stroke="#7f879c" stroke-width="0.9"/><ellipse cx="9.4" cy="8.95" rx="1.1" ry="1.55" fill="none" stroke="#7f879c" stroke-width="0.9"/></svg>
<div class="t" style="left:361px;top:178px;font-size:12px;line-height:19px;color:#000;transform:scaleX(0.9956);transform-origin:0 0">Network security: Restrict NTLM: NTLM authentication in th...</div>
<div class="t" style="left:695px;top:178px;font-size:12px;line-height:19px;color:#000;">Not Defined</div>
<svg style="left:345px;top:198px" width="14" height="15" viewBox="0 0 14 15">
<path d="M0.5 0.5 H9.5 L12.5 3.5 V13 L9.5 11.5 H0.5 Z" fill="#fff" stroke="#a3a8ac"/><path d="M9.5 0.5 V3.5 H12.5" fill="none" stroke="#a3a8ac"/>
<path d="M2.5 2 V5.7 M6.6 7.3 V10.6" stroke="#7f879c" stroke-width="1"/><ellipse cx="5.4" cy="3.85" rx="1.1" ry="1.55" fill="none" stroke="#7f879c" stroke-width="0.9"/><ellipse cx="3.4" cy="8.95" rx="1.1" ry="1.55" fill="none" stroke="#7f879c" stroke-width="0.9"/><ellipse cx="9.4" cy="8.95" rx="1.1" ry="1.55" fill="none" stroke="#7f879c" stroke-width="0.9"/></svg>
<div class="t" style="left:361px;top:197px;font-size:12px;line-height:19px;color:#000;transform:scaleX(1.0046);transform-origin:0 0">Network security: Restrict NTLM: Outgoing NTLM traffic to ...</div>
<div class="t" style="left:695px;top:197px;font-size:12px;line-height:19px;color:#000;">Not Defined</div>
<svg style="left:345px;top:217px" width="14" height="15" viewBox="0 0 14 15">
<path d="M0.5 0.5 H9.5 L12.5 3.5 V13 L9.5 11.5 H0.5 Z" fill="#fff" stroke="#a3a8ac"/><path d="M9.5 0.5 V3.5 H12.5" fill="none" stroke="#a3a8ac"/>
<path d="M2.5 2 V5.7 M6.6 7.3 V10.6" stroke="#7f879c" stroke-width="1"/><ellipse cx="5.4" cy="3.85" rx="1.1" ry="1.55" fill="none" stroke="#7f879c" stroke-width="0.9"/><ellipse cx="3.4" cy="8.95" rx="1.1" ry="1.55" fill="none" stroke="#7f879c" stroke-width="0.9"/><ellipse cx="9.4" cy="8.95" rx="1.1" ry="1.55" fill="none" stroke="#7f879c" stroke-width="0.9"/></svg>
<div class="t" style="left:361px;top:216px;font-size:12px;line-height:19px;color:#000;">Recovery console: Allow automatic administrative logon</div>
<div class="t" style="left:695px;top:216px;font-size:12px;line-height:19px;color:#000;">Not Defined</div>
<svg style="left:345px;top:236px" width="14" height="15" viewBox="0 0 14 15">
<path d="M0.5 0.5 H9.5 L12.5 3.5 V13 L9.5 11.5 H0.5 Z" fill="#fff" stroke="#a3a8ac"/><path d="M9.5 0.5 V3.5 H12.5" fill="none" stroke="#a3a8ac"/>
<path d="M2.5 2 V5.7 M6.6 7.3 V10.6" stroke="#7f879c" stroke-width="1"/><ellipse cx="5.4" cy="3.85" rx="1.1" ry="1.55" fill="none" stroke="#7f879c" stroke-width="0.9"/><ellipse cx="3.4" cy="8.95" rx="1.1" ry="1.55" fill="none" stroke="#7f879c" stroke-width="0.9"/><ellipse cx="9.4" cy="8.95" rx="1.1" ry="1.55" fill="none" stroke="#7f879c" stroke-width="0.9"/></svg>
<div class="t" style="left:361px;top:235px;font-size:12px;line-height:19px;color:#000;transform:scaleX(0.9754);transform-origin:0 0">Recovery console: Allow floppy copy and access to all drives...</div>
<div class="t" style="left:695px;top:235px;font-size:12px;line-height:19px;color:#000;">Not Defined</div>
<svg style="left:345px;top:255px" width="14" height="15" viewBox="0 0 14 15">
<path d="M0.5 0.5 H9.5 L12.5 3.5 V13 L9.5 11.5 H0.5 Z" fill="#fff" stroke="#a3a8ac"/><path d="M9.5 0.5 V3.5 H12.5" fill="none" stroke="#a3a8ac"/>
<path d="M2.5 2 V5.7 M6.6 7.3 V10.6" stroke="#7f879c" stroke-width="1"/><ellipse cx="5.4" cy="3.85" rx="1.1" ry="1.55" fill="none" stroke="#7f879c" stroke-width="0.9"/><ellipse cx="3.4" cy="8.95" rx="1.1" ry="1.55" fill="none" stroke="#7f879c" stroke-width="0.9"/><ellipse cx="9.4" cy="8.95" rx="1.1" ry="1.55" fill="none" stroke="#7f879c" stroke-width="0.9"/></svg>
<div class="t" style="left:361px;top:254px;font-size:12px;line-height:19px;color:#000;transform:scaleX(1.0098);transform-origin:0 0">Shutdown: Allow system to be shut down without having to...</div>
<div class="t" style="left:695px;top:254px;font-size:12px;line-height:19px;color:#000;">Not Defined</div>
<svg style="left:345px;top:274px" width="14" height="15" viewBox="0 0 14 15">
<path d="M0.5 0.5 H9.5 L12.5 3.5 V13 L9.5 11.5 H0.5 Z" fill="#fff" stroke="#a3a8ac"/><path d="M9.5 0.5 V3.5 H12.5" fill="none" stroke="#a3a8ac"/>
<path d="M2.5 2 V5.7 M6.6 7.3 V10.6" stroke="#7f879c" stroke-width="1"/><ellipse cx="5.4" cy="3.85" rx="1.1" ry="1.55" fill="none" stroke="#7f879c" stroke-width="0.9"/><ellipse cx="3.4" cy="8.95" rx="1.1" ry="1.55" fill="none" stroke="#7f879c" stroke-width="0.9"/><ellipse cx="9.4" cy="8.95" rx="1.1" ry="1.55" fill="none" stroke="#7f879c" stroke-width="0.9"/></svg>
<div class="t" style="left:361px;top:273px;font-size:12px;line-height:19px;color:#000;">Shutdown: Clear virtual memory pagefile</div>
<div class="t" style="left:695px;top:273px;font-size:12px;line-height:19px;color:#000;">Not Defined</div>
<svg style="left:345px;top:293px" width="14" height="15" viewBox="0 0 14 15">
<path d="M0.5 0.5 H9.5 L12.5 3.5 V13 L9.5 11.5 H0.5 Z" fill="#fff" stroke="#a3a8ac"/><path d="M9.5 0.5 V3.5 H12.5" fill="none" stroke="#a3a8ac"/>
<path d="M2.5 2 V5.7 M6.6 7.3 V10.6" stroke="#7f879c" stroke-width="1"/><ellipse cx="5.4" cy="3.85" rx="1.1" ry="1.55" fill="none" stroke="#7f879c" stroke-width="0.9"/><ellipse cx="3.4" cy="8.95" rx="1.1" ry="1.55" fill="none" stroke="#7f879c" stroke-width="0.9"/><ellipse cx="9.4" cy="8.95" rx="1.1" ry="1.55" fill="none" stroke="#7f879c" stroke-width="0.9"/></svg>
<div class="t" style="left:361px;top:292px;font-size:12px;line-height:19px;color:#000;transform:scaleX(0.9874);transform-origin:0 0">System cryptography: Force strong key protection for user k...</div>
<div class="t" style="left:695px;top:292px;font-size:12px;line-height:19px;color:#000;">Not Defined</div>
<svg style="left:345px;top:312px" width="14" height="15" viewBox="0 0 14 15">
<path d="M0.5 0.5 H9.5 L12.5 3.5 V13 L9.5 11.5 H0.5 Z" fill="#fff" stroke="#a3a8ac"/><path d="M9.5 0.5 V3.5 H12.5" fill="none" stroke="#a3a8ac"/>
<path d="M2.5 2 V5.7 M6.6 7.3 V10.6" stroke="#7f879c" stroke-width="1"/><ellipse cx="5.4" cy="3.85" rx="1.1" ry="1.55" fill="none" stroke="#7f879c" stroke-width="0.9"/><ellipse cx="3.4" cy="8.95" rx="1.1" ry="1.55" fill="none" stroke="#7f879c" stroke-width="0.9"/><ellipse cx="9.4" cy="8.95" rx="1.1" ry="1.55" fill="none" stroke="#7f879c" stroke-width="0.9"/></svg>
<div class="t" style="left:361px;top:311px;font-size:12px;line-height:19px;color:#000;transform:scaleX(0.9874);transform-origin:0 0">System cryptography: Use FIPS compliant algorithms for en...</div>
<div class="t" style="left:695px;top:311px;font-size:12px;line-height:19px;color:#000;">Not Defined</div>
<svg style="left:345px;top:331px" width="14" height="15" viewBox="0 0 14 15">
<path d="M0.5 0.5 H9.5 L12.5 3.5 V13 L9.5 11.5 H0.5 Z" fill="#fff" stroke="#a3a8ac"/><path d="M9.5 0.5 V3.5 H12.5" fill="none" stroke="#a3a8ac"/>
<path d="M2.5 2 V5.7 M6.6 7.3 V10.6" stroke="#7f879c" stroke-width="1"/><ellipse cx="5.4" cy="3.85" rx="1.1" ry="1.55" fill="none" stroke="#7f879c" stroke-width="0.9"/><ellipse cx="3.4" cy="8.95" rx="1.1" ry="1.55" fill="none" stroke="#7f879c" stroke-width="0.9"/><ellipse cx="9.4" cy="8.95" rx="1.1" ry="1.55" fill="none" stroke="#7f879c" stroke-width="0.9"/></svg>
<div class="t" style="left:361px;top:330px;font-size:12px;line-height:19px;color:#000;transform:scaleX(0.9814);transform-origin:0 0">System objects: Require case insensitivity for non-Windows ...</div>
<div class="t" style="left:695px;top:330px;font-size:12px;line-height:19px;color:#000;">Not Defined</div>
<svg style="left:345px;top:350px" width="14" height="15" viewBox="0 0 14 15">
<path d="M0.5 0.5 H9.5 L12.5 3.5 V13 L9.5 11.5 H0.5 Z" fill="#fff" stroke="#a3a8ac"/><path d="M9.5 0.5 V3.5 H12.5" fill="none" stroke="#a3a8ac"/>
<path d="M2.5 2 V5.7 M6.6 7.3 V10.6" stroke="#7f879c" stroke-width="1"/><ellipse cx="5.4" cy="3.85" rx="1.1" ry="1.55" fill="none" stroke="#7f879c" stroke-width="0.9"/><ellipse cx="3.4" cy="8.95" rx="1.1" ry="1.55" fill="none" stroke="#7f879c" stroke-width="0.9"/><ellipse cx="9.4" cy="8.95" rx="1.1" ry="1.55" fill="none" stroke="#7f879c" stroke-width="0.9"/></svg>
<div class="t" style="left:361px;top:349px;font-size:12px;line-height:19px;color:#000;transform:scaleX(0.9853);transform-origin:0 0">System objects: Strengthen default permissions of internal s...</div>
<div class="t" style="left:695px;top:349px;font-size:12px;line-height:19px;color:#000;">Not Defined</div>
<svg style="left:345px;top:369px" width="14" height="15" viewBox="0 0 14 15">
<path d="M0.5 0.5 H9.5 L12.5 3.5 V13 L9.5 11.5 H0.5 Z" fill="#fff" stroke="#a3a8ac"/><path d="M9.5 0.5 V3.5 H12.5" fill="none" stroke="#a3a8ac"/>
<path d="M2.5 2 V5.7 M6.6 7.3 V10.6" stroke="#7f879c" stroke-width="1"/><ellipse cx="5.4" cy="3.85" rx="1.1" ry="1.55" fill="none" stroke="#7f879c" stroke-width="0.9"/><ellipse cx="3.4" cy="8.95" rx="1.1" ry="1.55" fill="none" stroke="#7f879c" stroke-width="0.9"/><ellipse cx="9.4" cy="8.95" rx="1.1" ry="1.55" fill="none" stroke="#7f879c" stroke-width="0.9"/></svg>
<div class="t" style="left:361px;top:368px;font-size:12px;line-height:19px;color:#000;">System settings: Optional subsystems</div>
<div class="t" style="left:695px;top:368px;font-size:12px;line-height:19px;color:#000;">Not Defined</div>
<svg style="left:345px;top:388px" width="14" height="15" viewBox="0 0 14 15">
<path d="M0.5 0.5 H9.5 L12.5 3.5 V13 L9.5 11.5 H0.5 Z" fill="#fff" stroke="#a3a8ac"/><path d="M9.5 0.5 V3.5 H12.5" fill="none" stroke="#a3a8ac"/>
<path d="M2.5 2 V5.7 M6.6 7.3 V10.6" stroke="#7f879c" stroke-width="1"/><ellipse cx="5.4" cy="3.85" rx="1.1" ry="1.55" fill="none" stroke="#7f879c" stroke-width="0.9"/><ellipse cx="3.4" cy="8.95" rx="1.1" ry="1.55" fill="none" stroke="#7f879c" stroke-width="0.9"/><ellipse cx="9.4" cy="8.95" rx="1.1" ry="1.55" fill="none" stroke="#7f879c" stroke-width="0.9"/></svg>
<div class="t" style="left:361px;top:387px;font-size:12px;line-height:19px;color:#000;transform:scaleX(0.9563);transform-origin:0 0">System settings: Use Certificate Rules on Windows Executabl...</div>
<div class="t" style="left:695px;top:387px;font-size:12px;line-height:19px;color:#000;">Not Defined</div>
<svg style="left:345px;top:407px" width="14" height="15" viewBox="0 0 14 15">
<path d="M0.5 0.5 H9.5 L12.5 3.5 V13 L9.5 11.5 H0.5 Z" fill="#fff" stroke="#a3a8ac"/><path d="M9.5 0.5 V3.5 H12.5" fill="none" stroke="#a3a8ac"/>
<path d="M2.5 2 V5.7 M6.6 7.3 V10.6" stroke="#7f879c" stroke-width="1"/><ellipse cx="5.4" cy="3.85" rx="1.1" ry="1.55" fill="none" stroke="#7f879c" stroke-width="0.9"/><ellipse cx="3.4" cy="8.95" rx="1.1" ry="1.55" fill="none" stroke="#7f879c" stroke-width="0.9"/><ellipse cx="9.4" cy="8.95" rx="1.1" ry="1.55" fill="none" stroke="#7f879c" stroke-width="0.9"/></svg>
<div class="t" style="left:361px;top:406px;font-size:12px;line-height:19px;color:#000;transform:scaleX(1.0205);transform-origin:0 0">User Account Control: Admin Approval Mode for the Built-i...</div>
<div class="t" style="left:695px;top:406px;font-size:12px;line-height:19px;color:#000;">Not Defined</div>
<svg style="left:345px;top:426px" width="14" height="15" viewBox="0 0 14 15">
<path d="M0.5 0.5 H9.5 L12.5 3.5 V13 L9.5 11.5 H0.5 Z" fill="#fff" stroke="#a3a8ac"/><path d="M9.5 0.5 V3.5 H12.5" fill="none" stroke="#a3a8ac"/>
<path d="M2.5 2 V5.7 M6.6 7.3 V10.6" stroke="#7f879c" stroke-width="1"/><ellipse cx="5.4" cy="3.85" rx="1.1" ry="1.55" fill="none" stroke="#7f879c" stroke-width="0.9"/><ellipse cx="3.4" cy="8.95" rx="1.1" ry="1.55" fill="none" stroke="#7f879c" stroke-width="0.9"/><ellipse cx="9.4" cy="8.95" rx="1.1" ry="1.55" fill="none" stroke="#7f879c" stroke-width="0.9"/></svg>
<div class="t" style="left:361px;top:425px;font-size:12px;line-height:19px;color:#000;transform:scaleX(1.0037);transform-origin:0 0">User Account Control: Allow UIAccess applications to prom...</div>
<div class="t" style="left:695px;top:425px;font-size:12px;line-height:19px;color:#000;">Not Defined</div>
<svg style="left:345px;top:445px" width="14" height="15" viewBox="0 0 14 15">
<path d="M0.5 0.5 H9.5 L12.5 3.5 V13 L9.5 11.5 H0.5 Z" fill="#fff" stroke="#a3a8ac"/><path d="M9.5 0.5 V3.5 H12.5" fill="none" stroke="#a3a8ac"/>
<path d="M2.5 2 V5.7 M6.6 7.3 V10.6" stroke="#7f879c" stroke-width="1"/><ellipse cx="5.4" cy="3.85" rx="1.1" ry="1.55" fill="none" stroke="#7f879c" stroke-width="0.9"/><ellipse cx="3.4" cy="8.95" rx="1.1" ry="1.55" fill="none" stroke="#7f879c" stroke-width="0.9"/><ellipse cx="9.4" cy="8.95" rx="1.1" ry="1.55" fill="none" stroke="#7f879c" stroke-width="0.9"/></svg>
<div class="t" style="left:361px;top:444px;font-size:12px;line-height:19px;color:#000;transform:scaleX(1.0015);transform-origin:0 0">User Account Control: Behavior of the elevation prompt for ...</div>
<div class="t" style="left:695px;top:444px;font-size:12px;line-height:19px;color:#000;">Elevate without prompting</div>
<svg style="left:345px;top:464px" width="14" height="15" viewBox="0 0 14 15">
<path d="M0.5 0.5 H9.5 L12.5 3.5 V13 L9.5 11.5 H0.5 Z" fill="#fff" stroke="#a3a8ac"/><path d="M9.5 0.5 V3.5 H12.5" fill="none" stroke="#a3a8ac"/>
<path d="M2.5 2 V5.7 M6.6 7.3 V10.6" stroke="#7f879c" stroke-width="1"/><ellipse cx="5.4" cy="3.85" rx="1.1" ry="1.55" fill="none" stroke="#7f879c" stroke-width="0.9"/><ellipse cx="3.4" cy="8.95" rx="1.1" ry="1.55" fill="none" stroke="#7f879c" stroke-width="0.9"/><ellipse cx="9.4" cy="8.95" rx="1.1" ry="1.55" fill="none" stroke="#7f879c" stroke-width="0.9"/></svg>
<div class="t" style="left:361px;top:463px;font-size:12px;line-height:19px;color:#000;transform:scaleX(1.0015);transform-origin:0 0">User Account Control: Behavior of the elevation prompt for ...</div>
<div class="t" style="left:695px;top:463px;font-size:12px;line-height:19px;color:#000;">Not Defined</div>
<svg style="left:345px;top:483px" width="14" height="15" viewBox="0 0 14 15">
<path d="M0.5 0.5 H9.5 L12.5 3.5 V13 L9.5 11.5 H0.5 Z" fill="#fff" stroke="#a3a8ac"/><path d="M9.5 0.5 V3.5 H12.5" fill="none" stroke="#a3a8ac"/>
<path d="M2.5 2 V5.7 M6.6 7.3 V10.6" stroke="#7f879c" stroke-width="1"/><ellipse cx="5.4" cy="3.85" rx="1.1" ry="1.55" fill="none" stroke="#7f879c" stroke-width="0.9"/><ellipse cx="3.4" cy="8.95" rx="1.1" ry="1.55" fill="none" stroke="#7f879c" stroke-width="0.9"/><ellipse cx="9.4" cy="8.95" rx="1.1" ry="1.55" fill="none" stroke="#7f879c" stroke-width="0.9"/></svg>
<div class="t" style="left:361px;top:482px;font-size:12px;line-height:19px;color:#000;transform:scaleX(0.9974);transform-origin:0 0">User Account Control: Detect application installations and p...</div>
<div class="t" style="left:695px;top:482px;font-size:12px;line-height:19px;color:#000;">Disabled</div>
<svg style="left:345px;top:502px" width="14" height="15" viewBox="0 0 14 15">
<path d="M0.5 0.5 H9.5 L12.5 3.5 V13 L9.5 11.5 H0.5 Z" fill="#fff" stroke="#a3a8ac"/><path d="M9.5 0.5 V3.5 H12.5" fill="none" stroke="#a3a8ac"/>
<path d="M2.5 2 V5.7 M6.6 7.3 V10.6" stroke="#7f879c" stroke-width="1"/><ellipse cx="5.4" cy="3.85" rx="1.1" ry="1.55" fill="none" stroke="#7f879c" stroke-width="0.9"/><ellipse cx="3.4" cy="8.95" rx="1.1" ry="1.55" fill="none" stroke="#7f879c" stroke-width="0.9"/><ellipse cx="9.4" cy="8.95" rx="1.1" ry="1.55" fill="none" stroke="#7f879c" stroke-width="0.9"/></svg>
<div class="t" style="left:361px;top:501px;font-size:12px;line-height:19px;color:#000;transform:scaleX(0.9715);transform-origin:0 0">User Account Control: Only elevate executables that are sign...</div>
<div class="t" style="left:695px;top:501px;font-size:12px;line-height:19px;color:#000;">Disabled</div>
<div style="left:359px;top:519px;width:493px;height:19px;background:#3399ff"></div>
<svg style="left:345px;top:521px" width="14" height="15" viewBox="0 0 14 15">
<path d="M0.5 0.5 H9.5 L12.5 3.5 V13 L9.5 11.5 H0.5 Z" fill="#dbeafa" stroke="#6f9ccc"/><path d="M9.5 0.5 V3.5 H12.5" fill="none" stroke="#6f9ccc"/>
<path d="M2.5 2 V5.7 M6.6 7.3 V10.6" stroke="#5a7eb0" stroke-width="1"/><ellipse cx="5.4" cy="3.85" rx="1.1" ry="1.55" fill="none" stroke="#5a7eb0" stroke-width="0.9"/><ellipse cx="3.4" cy="8.95" rx="1.1" ry="1.55" fill="none" stroke="#5a7eb0" stroke-width="0.9"/><ellipse cx="9.4" cy="8.95" rx="1.1" ry="1.55" fill="none" stroke="#5a7eb0" stroke-width="0.9"/></svg>
<div class="t" style="left:361px;top:520px;font-size:12px;line-height:19px;color:#fff;transform:scaleX(0.9794);transform-origin:0 0">User Account Control: Only elevate UIAccess applications th...</div>
<div class="t" style="left:695px;top:520px;font-size:12px;line-height:19px;color:#fff;">Disabled</div>
<svg style="left:345px;top:540px" width="14" height="15" viewBox="0 0 14 15">
<path d="M0.5 0.5 H9.5 L12.5 3.5 V13 L9.5 11.5 H0.5 Z" fill="#fff" stroke="#a3a8ac"/><path d="M9.5 0.5 V3.5 H12.5" fill="none" stroke="#a3a8ac"/>
<path d="M2.5 2 V5.7 M6.6 7.3 V10.6" stroke="#7f879c" stroke-width="1"/><ellipse cx="5.4" cy="3.85" rx="1.1" ry="1.55" fill="none" stroke="#7f879c" stroke-width="0.9"/><ellipse cx="3.4" cy="8.95" rx="1.1" ry="1.55" fill="none" stroke="#7f879c" stroke-width="0.9"/><ellipse cx="9.4" cy="8.95" rx="1.1" ry="1.55" fill="none" stroke="#7f879c" stroke-width="0.9"/></svg>
<div class="t" style="left:361px;top:539px;font-size:12px;line-height:19px;color:#000;transform:scaleX(1.0036);transform-origin:0 0">User Account Control: Run all administrators in Admin Appr...</div>
<div class="t" style="left:695px;top:539px;font-size:12px;line-height:19px;color:#000;">Not Defined</div>
<svg style="left:345px;top:559px" width="14" height="15" viewBox="0 0 14 15">
<path d="M0.5 0.5 H9.5 L12.5 3.5 V13 L9.5 11.5 H0.5 Z" fill="#fff" stroke="#a3a8ac"/><path d="M9.5 0.5 V3.5 H12.5" fill="none" stroke="#a3a8ac"/>
<path d="M2.5 2 V5.7 M6.6 7.3 V10.6" stroke="#7f879c" stroke-width="1"/><ellipse cx="5.4" cy="3.85" rx="1.1" ry="1.55" fill="none" stroke="#7f879c" stroke-width="0.9"/><ellipse cx="3.4" cy="8.95" rx="1.1" ry="1.55" fill="none" stroke="#7f879c" stroke-width="0.9"/><ellipse cx="9.4" cy="8.95" rx="1.1" ry="1.55" fill="none" stroke="#7f879c" stroke-width="0.9"/></svg>
<div class="t" style="left:361px;top:558px;font-size:12px;line-height:19px;color:#000;transform:scaleX(0.9853);transform-origin:0 0">User Account Control: Switch to the secure desktop when pr...</div>
<div class="t" style="left:695px;top:558px;font-size:12px;line-height:19px;color:#000;">Not Defined</div>
<svg style="left:345px;top:578px" width="14" height="15" viewBox="0 0 14 15">
<path d="M0.5 0.5 H9.5 L12.5 3.5 V13 L9.5 11.5 H0.5 Z" fill="#fff" stroke="#a3a8ac"/><path d="M9.5 0.5 V3.5 H12.5" fill="none" stroke="#a3a8ac"/>
<path d="M2.5 2 V5.7 M6.6 7.3 V10.6" stroke="#7f879c" stroke-width="1"/><ellipse cx="5.4" cy="3.85" rx="1.1" ry="1.55" fill="none" stroke="#7f879c" stroke-width="0.9"/><ellipse cx="3.4" cy="8.95" rx="1.1" ry="1.55" fill="none" stroke="#7f879c" stroke-width="0.9"/><ellipse cx="9.4" cy="8.95" rx="1.1" ry="1.55" fill="none" stroke="#7f879c" stroke-width="0.9"/></svg>
<div class="t" style="left:361px;top:577px;font-size:12px;line-height:19px;color:#000;transform:scaleX(0.9860);transform-origin:0 0">User Account Control: Virtualize file and registry write failure...</div>
<div class="t" style="left:695px;top:577px;font-size:12px;line-height:19px;color:#000;">Not Defined</div>
<div style="left:852px;top:158px;width:17px;height:437px;background:#fff;border-left:1px solid #e3e3e3;border-right:1px solid #e3e3e3"></div>
<div style="left:852px;top:158px;width:17px;height:17px;background:#fff;border:1px solid #c8c8c8"></div>
<svg style="left:856px;top:163px" width="9" height="6"><path d="M0.8 5.2 L4.5 1.2 L8.2 5.2" fill="none" stroke="#606060" stroke-width="1.4"/></svg>
<div style="left:852px;top:485px;width:17px;height:93px;background:#dadada;border:1px solid #a6a6a6"></div>
<div style="left:857px;top:529px;width:7px;height:1px;background:#606060;box-shadow:0 2px 0 #606060,0 4px 0 #606060"></div>
<div style="left:852px;top:578px;width:17px;height:17px;background:#fff;border:1px solid #c8c8c8"></div>
<svg style="left:856px;top:584px" width="9" height="6"><path d="M0.8 0.8 L4.5 4.8 L8.2 0.8" fill="none" stroke="#606060" stroke-width="1.4"/></svg>
<div style="left:339px;top:595px;width:513px;height:17px;background:#fff;border-top:1px solid #e3e3e3"></div>
<div style="left:339px;top:595px;width:17px;height:17px;background:#fff;border:1px solid #c8c8c8"></div>
<svg style="left:345px;top:599px" width="6" height="9"><path d="M5.2 0.8 L1.2 4.5 L5.2 8.2" fill="none" stroke="#606060" stroke-width="1.4"/></svg>
<div style="left:356px;top:595px;width:455px;height:17px;background:#dadada;border:1px solid #a6a6a6"></div>
<div style="left:580px;top:600px;width:1px;height:7px;background:#606060;box-shadow:2px 0 0 #606060,4px 0 0 #606060"></div>
<div style="left:835px;top:595px;width:17px;height:17px;background:#fff;border:1px solid #c8c8c8"></div>
<svg style="left:841px;top:599px" width="6" height="9"><path d="M0.8 0.8 L4.8 4.5 L0.8 8.2" fill="none" stroke="#606060" stroke-width="1.4"/></svg>
<div style="left:852px;top:595px;width:17px;height:17px;background:#f0f0f0"></div>
<svg style="left:91px;top:132px" width="16" height="15" viewBox="0 0 16 15"><path d="M0.8 7.5 L8 0.8 V4.3 H15.2 V10.7 H8 V14.2 Z" fill="#3d9ee6" stroke="#2a7cc0" stroke-width="1" stroke-linejoin="round"/><path d="M8.5 5 H14.5 V7 H8.5 Z" fill="#7cc4f4" opacity="0.8"/></svg>
<svg style="left:114px;top:132px" width="16" height="15" viewBox="0 0 16 15"><g transform="translate(16,0) scale(-1,1)"><path d="M0.8 7.5 L8 0.8 V4.3 H15.2 V10.7 H8 V14.2 Z" fill="#8e959b" stroke="#5a6066" stroke-width="1" stroke-linejoin="round"/><path d="M8.5 5 H14.5 V7 H8.5 Z" fill="#b8bec2" opacity="0.8"/></g></svg>
<div style="left:134px;top:128px;width:1px;height:22px;background:#a8a8a8"></div>
<svg style="left:146px;top:132px" width="15" height="15" viewBox="0 0 15 15"><path d="M0.5 3.5 H6 L7 2.5 H14.5 V14.5 H0.5 Z" fill="#f0cf7c" stroke="#c9a24a"/><path d="M1 6 H14 V14 H1 Z" fill="#f6dd98"/><rect x="9" y="3" width="4" height="1.5" fill="#5aaae0"/><path d="M3 11 L6 7 L5.5 4.5 L9 2 L8.5 5.5 L5 9.5 Z" fill="#2c9a4a" stroke="#1a7a38" stroke-width="0.6"/></svg>
<div style="left:165px;top:128px;width:24px;height:22px;background:#dde9f0;border:1px solid #3a9be6;box-shadow:inset 0 0 0 1px #f4f8fb"></div>
<svg style="left:169px;top:134px" width="16" height="13" viewBox="0 0 16 13"><rect x="0.5" y="0.5" width="15" height="12" fill="#f6f6f6" stroke="#7d858a"/><path d="M1 3 H15" stroke="#7d858a"/><rect x="11" y="1.2" width="1.2" height="1.2" fill="#7d858a"/><rect x="13" y="1.2" width="1.2" height="1.2" fill="#7d858a"/><path d="M4.5 4 V12.5" stroke="#7d858a"/><path d="M1.8 6 H3.5 M1.8 8 H3.5 M1.8 10 H3.5" stroke="#3a8ed8" stroke-width="1.1"/><path d="M10.5 5.5 L7 8 L10.5 10.5 Z" fill="#2aa048"/></svg>
<svg style="left:199px;top:131px" width="16" height="16" viewBox="0 0 16 16"><path d="M2.5 2.5 L13.5 13.5 M13.5 2.5 L2.5 13.5" stroke="#3e3e3e" stroke-width="3.6" stroke-linecap="round"/><path d="M2.5 2.5 L13.5 13.5 M13.5 2.5 L2.5 13.5" stroke="#6a6a6a" stroke-width="1.2" stroke-linecap="round"/></svg>
<svg style="left:222px;top:131px" width="15" height="16" viewBox="0 0 15 16"><rect x="0.5" y="0.5" width="14" height="15" rx="1" fill="#f8f8f8" stroke="#7d858a"/><path d="M1 2.5 H14" stroke="#bcc2c6"/><rect x="2.5" y="4.5" width="10" height="8" fill="#eef2f6" stroke="#9aa2a8"/><rect x="4" y="6.5" width="1.2" height="1.2" fill="#2a7fd0"/><path d="M6 7 H11 M6 9.5 H11" stroke="#8a9298"/><rect x="6" y="13.5" width="3" height="1.5" fill="#2a8ae0"/></svg>
<svg style="left:245px;top:131px" width="17" height="16" viewBox="0 0 17 16"><path d="M0.5 0.5 H9.5 L12.5 3.5 V15.5 H0.5 Z" fill="#fbf3d2" stroke="#8d9398"/><circle cx="3" cy="5.5" r="0.7" fill="#333"/><circle cx="3" cy="8.5" r="0.7" fill="#333"/><circle cx="3" cy="11.5" r="0.7" fill="#333"/><path d="M5 5.5 H9 M5 8.5 H8 M5 11.5 H8" stroke="#777"/><path d="M7 8 H11 V5.5 L16 9.5 L11 13.5 V11 H7 Z" fill="#3fb04a" stroke="#1e8030" stroke-width="0.6"/></svg>
<div style="left:265px;top:128px;width:1px;height:22px;background:#a8a8a8"></div>
<svg style="left:277px;top:131px" width="14" height="16" viewBox="0 0 14 16"><rect x="0.5" y="0.5" width="13" height="15" fill="#5aa8dc" stroke="#1f4f8a"/><rect x="0.5" y="0.5" width="3" height="15" fill="#1f4f8a"/><path d="M5.5 5 Q5.5 2.8 8 2.8 Q10.5 2.8 10.5 5 Q10.5 6.5 8.5 7.5 V9.5" fill="none" stroke="#fff" stroke-width="1.7"/><circle cx="8.5" cy="12" r="1.1" fill="#fff"/></svg>
<svg style="left:299px;top:134px" width="16" height="13" viewBox="0 0 16 13"><rect x="0.5" y="0.5" width="15" height="12" fill="#f6f6f6" stroke="#7d858a"/><path d="M1 3 H15" stroke="#7d858a"/><rect x="11" y="1.2" width="1.2" height="1.2" fill="#7d858a"/><rect x="13" y="1.2" width="1.2" height="1.2" fill="#7d858a"/><path d="M10.5 4 V12.5" stroke="#7d858a"/><path d="M12.2 6 H14 M12.2 8 H14 M12.2 10 H14" stroke="#3a8ed8" stroke-width="1.1"/><path d="M4 5.5 L7.5 8 L4 10.5 Z" fill="#2aa048"/></svg>
<svg style="left:88px;top:81px" width="16" height="15" viewBox="0 0 16 15"><path d="M3.5 0.5 H13.5 Q15.5 0.8 14.5 2.5 L12.5 3 V11.5 Q12 13.5 10 14.5 H1.5 Q0 13 2 11.5 H3.5 Z" fill="#fbf2cf" stroke="#c2ad7a"/><path d="M5.5 3.5 H10.5 M5.5 5.5 H10.5 M5.5 7.5 H10.5 M5.5 9.5 H10.5" stroke="#8c8c8c"/><path d="M1 12 H10 V14.5 H1 Z" fill="#f2dd9c"/></svg>
<div style="left:0px;top:711px;width:1044px;height:38px;background:#66c9ea"></div>
<div style="left:0px;top:711px;width:1044px;height:1px;background:#3a5660"></div>
<div style="left:0px;top:712px;width:1044px;height:1px;background:#70d2f2"></div>
<div style="left:46px;top:712px;width:1px;height:37px;background:#335a72"></div>
<div style="left:47px;top:712px;width:58px;height:37px;background:#79d0ee"></div>
<div style="left:105px;top:712px;width:1px;height:37px;background:#335a72"></div>
<div style="left:294px;top:712px;width:1px;height:37px;background:#335a72"></div>
<div style="left:295px;top:712px;width:58px;height:37px;background:#79d0ee"></div>
<div style="left:353px;top:712px;width:1px;height:37px;background:#335a72"></div>
<div style="left:356px;top:712px;width:1px;height:37px;background:#335a72"></div>
<div style="left:357px;top:712px;width:58px;height:37px;background:#a0ddf2"></div>
<div style="left:415px;top:712px;width:1px;height:37px;background:#335a72"></div>
<svg style="left:6px;top:717px" width="28" height="27" viewBox="0 0 28 27"><path d="M1 3.8 L12 2.3 V12.5 H1 Z M13.5 2.1 L27 0.3 V12.5 H13.5 Z M1 14 H12 V24.3 L1 22.8 Z M13.5 14 H27 V26.3 L13.5 24.5 Z" fill="#fff"/></svg>
<svg style="left:59px;top:715px" width="34" height="32" viewBox="0 0 34 32"><rect x="1" y="0.8" width="15.5" height="28" fill="#2a8ad8" stroke="#fff" stroke-width="1.6"/><path d="M1.8 7 H15.7" stroke="#fff" stroke-width="1.3"/><path d="M12.5 15.5 V13.5 Q12.5 12.6 13.4 12.6 H19.6 Q20.5 12.6 20.5 13.5 V15.5" fill="none" stroke="#fff" stroke-width="1.4"/><rect x="6.5" y="15.5" width="26.5" height="15.5" rx="1.5" fill="#7c8f96" stroke="#fff" stroke-width="1.6"/><path d="M9.5 21 H30" stroke="#fff" stroke-width="1.4"/><circle cx="11.5" cy="21" r="1.3" fill="#fff"/><circle cx="28" cy="21" r="1.3" fill="#fff"/></svg>
<svg style="left:124px;top:719px" width="30" height="24" viewBox="0 0 30 24"><defs><linearGradient id="psg" x1="0" y1="0" x2="0" y2="1"><stop offset="0" stop-color="#c8e8fa"/><stop offset="0.45" stop-color="#6ab6ec"/><stop offset="0.5" stop-color="#2a8ad8"/><stop offset="1" stop-color="#2a86d0"/></linearGradient></defs><path d="M6.5 1 H27.5 Q28.8 1 28.5 2.3 L24.3 21.7 Q24 23 22.7 23 H2 Q0.7 23 1 21.7 L5.2 2.3 Q5.5 1 6.5 1 Z" fill="url(#psg)" stroke="#2a6a90" stroke-width="1.2"/><path d="M11 5 L17 11 L10.5 17" fill="none" stroke="#fff" stroke-width="2.2" stroke-linecap="round"/><path d="M14 17.3 H19" stroke="#dff" stroke-width="1.6" stroke-linecap="round"/></svg>
<svg style="left:184px;top:717px" width="32" height="30" viewBox="0 0 32 30"><path d="M1 3 Q1 1.5 2.5 1.5 H15 L16.5 3 H28 L29 5 H31 V27 H1 Z" fill="#e7c46a" stroke="#c9a34e"/><rect x="3.5" y="2.5" width="9" height="3" fill="#fff"/><rect x="3.5" y="2.5" width="3" height="2.5" fill="#22a04a"/><rect x="11" y="4" width="9" height="3" fill="#fff"/><rect x="11" y="4" width="3" height="2.5" fill="#d82a2a"/><rect x="18" y="6.5" width="9" height="3" fill="#fff"/><rect x="18" y="6.5" width="3" height="2.5" fill="#2a7ae0"/><path d="M1.5 7.5 H17 L18.5 9.5 H30.5 V26.5 H1.5 Z" fill="#f8e3a0"/><path d="M1.5 26.5 L30.5 9.5 V26.5 Z" fill="#f3d27a"/><path d="M3.5 17.5 H27.5 V28.5 H22 V24 H9.5 V28.5 H3.5 Z" fill="#b8dcf6" stroke="#2a7ed0" stroke-width="1.2"/><path d="M4.5 18.5 H26.5 V21 H4.5 Z" fill="#e6f4fd"/></svg>
<svg style="left:247px;top:716px" width="30" height="30" viewBox="247 716 30 30"><path d="M262.00 724.25 L275.40 724.25 A15 15 0 0 0 249.46 722.77 L256.15 734.38 Z" fill="#db4437"/><path d="M267.85 734.38 L261.15 745.98 A15 15 0 0 0 275.40 724.25 L262.00 724.25 Z" fill="#fcc934"/><path d="M256.15 734.38 L249.46 722.77 A15 15 0 0 0 261.15 745.98 L267.85 734.38 Z" fill="#1ea362"/><circle cx="262" cy="731" r="6.75" fill="#fff"/><circle cx="262" cy="731" r="5.47" fill="#3e95f0"/></svg>
<svg style="left:310px;top:715px" width="31" height="32" viewBox="0 0 31 32"><path d="M6.5 1.5 H26 Q29 1.5 29 3.5 Q29 5.5 26.5 5.5 H24.5 V25 Q24.5 28 22 29 H3 Q0.8 29 0.8 27 Q0.8 25 3 25 H6.5 Z" fill="#fdf6d8" stroke="#d8bd78" stroke-width="1"/><path d="M24.5 3 Q26.5 2.5 27 4" fill="none" stroke="#e8c060" stroke-width="1.5"/><path d="M1.5 25.5 H21 Q23 26.5 22 29 H3 Q0.5 28.5 1.5 25.5 Z" fill="#f3dc98" stroke="#d8bd78" stroke-width="0.8"/><path d="M10 7 H21 M10 10 H21 M10 13 H21 M10 16 H21 M10 19 H21 M10 22 H21" stroke="#9a9a9a" stroke-width="1.2"/><defs><linearGradient id="tbx" x1="0" y1="0" x2="0" y2="1"><stop offset="0" stop-color="#b8c2c8"/><stop offset="1" stop-color="#6e7a82"/></linearGradient></defs><path d="M13 19.5 Q13 18 14.5 18 H29.5 Q31 18 31 19.5 V30 Q31 31.5 29.5 31.5 H14.5 Q13 31.5 13 30 Z" fill="url(#tbx)" stroke="#5a6670"/><path d="M18.5 18 V16 Q18.5 15 19.5 15 H24.5 Q25.5 15 25.5 16 V18" fill="none" stroke="#3a3a3a" stroke-width="1.3"/><path d="M13.5 23 H30.5" stroke="#8a969e"/><circle cx="18" cy="24" r="1" fill="#eee"/><circle cx="26" cy="24" r="1" fill="#eee"/></svg>
<svg style="left:372px;top:715px" width="30" height="32" viewBox="0 0 30 32"><path d="M6.5 1.5 H26 Q29 1.5 29 3.5 Q29 5.5 26.5 5.5 H24.5 V25 Q24.5 28 22 29 H3 Q0.8 29 0.8 27 Q0.8 25 3 25 H6.5 Z" fill="#fdf6d8" stroke="#d8bd78" stroke-width="1"/><path d="M24.5 3 Q26.5 2.5 27 4" fill="none" stroke="#e8c060" stroke-width="1.5"/><path d="M1.5 25.5 H21 Q23 26.5 22 29 H3 Q0.5 28.5 1.5 25.5 Z" fill="#f3dc98" stroke="#d8bd78" stroke-width="0.8"/><path d="M10 7 H21 M10 10 H21 M10 13 H21 M10 16 H21 M10 19 H21 M10 22 H21" stroke="#9a9a9a" stroke-width="1.2"/></svg>
<svg style="left:853px;top:729px" width="8" height="4" viewBox="0 0 8 4"><path d="M0 4 L4 0 L8 4 Z" fill="#111"/></svg>
<svg style="left:872px;top:723px" width="18" height="16" viewBox="0 0 18 16"><path d="M2.5 1 V4 M5.5 1 V4" fill="none" stroke="#1d3f52" stroke-width="2.8" stroke-linejoin="round"/><path d="M2.5 1 V4 M5.5 1 V4" fill="none" stroke="#fff" stroke-width="1.4" stroke-linejoin="round"/><rect x="1" y="4.5" width="6" height="4" fill="#fff" stroke="#1d3f52" stroke-width="0.8"/><path d="M4 8.5 V15" fill="none" stroke="#1d3f52" stroke-width="3.2" stroke-linejoin="round"/><path d="M4 8.5 V15" fill="none" stroke="#fff" stroke-width="1.8" stroke-linejoin="round"/><rect x="9" y="2.5" width="7.5" height="12.5" fill="none" stroke="#1d3f52" stroke-width="3.2"/><rect x="9" y="2.5" width="7.5" height="12.5" fill="none" stroke="#fff" stroke-width="1.8"/><rect x="10.5" y="5" width="4.5" height="8.5" fill="#3a8ab8" opacity="0.25"/></svg>
<svg style="left:896px;top:723px" width="18" height="17" viewBox="0 0 18 17"><path d="M1.5 5.5 H4 L8 1.5 V14.5 L4 10.5 H1.5 Z" fill="#fff" stroke="#1d3f52" stroke-width="0.9"/><circle cx="12" cy="11.5" r="4.7" fill="#d8402e" stroke="#a02a1a" stroke-width="0.6"/><path d="M10 9.5 L14 13.5 M14 9.5 L10 13.5" stroke="#fff" stroke-width="1.6"/></svg>
<svg style="left:921px;top:723px" width="18" height="16" viewBox="0 0 18 16"><path d="M3.5 8 V15.5" fill="none" stroke="#1d3f52" stroke-width="3.2" stroke-linejoin="round"/><path d="M3.5 8 V15.5" fill="none" stroke="#fff" stroke-width="1.8" stroke-linejoin="round"/><circle cx="3.5" cy="4.5" r="3" fill="none" stroke="#1d3f52" stroke-width="3"/><circle cx="3.5" cy="4.5" r="3" fill="none" stroke="#fff" stroke-width="1.6"/><rect x="8" y="2.5" width="8.5" height="8" fill="none" stroke="#1d3f52" stroke-width="3"/><rect x="8" y="2.5" width="8.5" height="8" fill="none" stroke="#fff" stroke-width="1.6"/><path d="M12.2 11 V13.5 M9 14 H15.5" fill="none" stroke="#1d3f52" stroke-width="2.9" stroke-linejoin="round"/><path d="M12.2 11 V13.5 M9 14 H15.5" fill="none" stroke="#fff" stroke-width="1.5" stroke-linejoin="round"/></svg>
<svg style="left:945px;top:723px" width="17" height="17" viewBox="0 0 17 17"><path d="M1.5 1 V16" fill="none" stroke="#1d3f52" stroke-width="3.0" stroke-linejoin="round"/><path d="M1.5 1 V16" fill="none" stroke="#fff" stroke-width="1.6" stroke-linejoin="round"/><path d="M3 1.5 Q6 0.8 9 2.5 Q12 4 15 3 V9 Q12 10 9 8.5 Q6 7 3 8 Z" fill="#fff" stroke="#1d3f52" stroke-width="0.9"/><circle cx="11" cy="11.5" r="4.7" fill="#d8402e" stroke="#a02a1a" stroke-width="0.6"/><path d="M9 9.5 L13 13.5 M13 9.5 L9 13.5" stroke="#fff" stroke-width="1.6"/></svg>
<div class="t" style="left:960px;top:716px;font-size:12px;line-height:15px;color:#000;width:88px;text-align:center">1:25 AM</div>
<div class="t" style="left:960px;top:733px;font-size:12px;line-height:15px;color:#000;width:88px;text-align:center">1/8/2020</div>
</body></html>
